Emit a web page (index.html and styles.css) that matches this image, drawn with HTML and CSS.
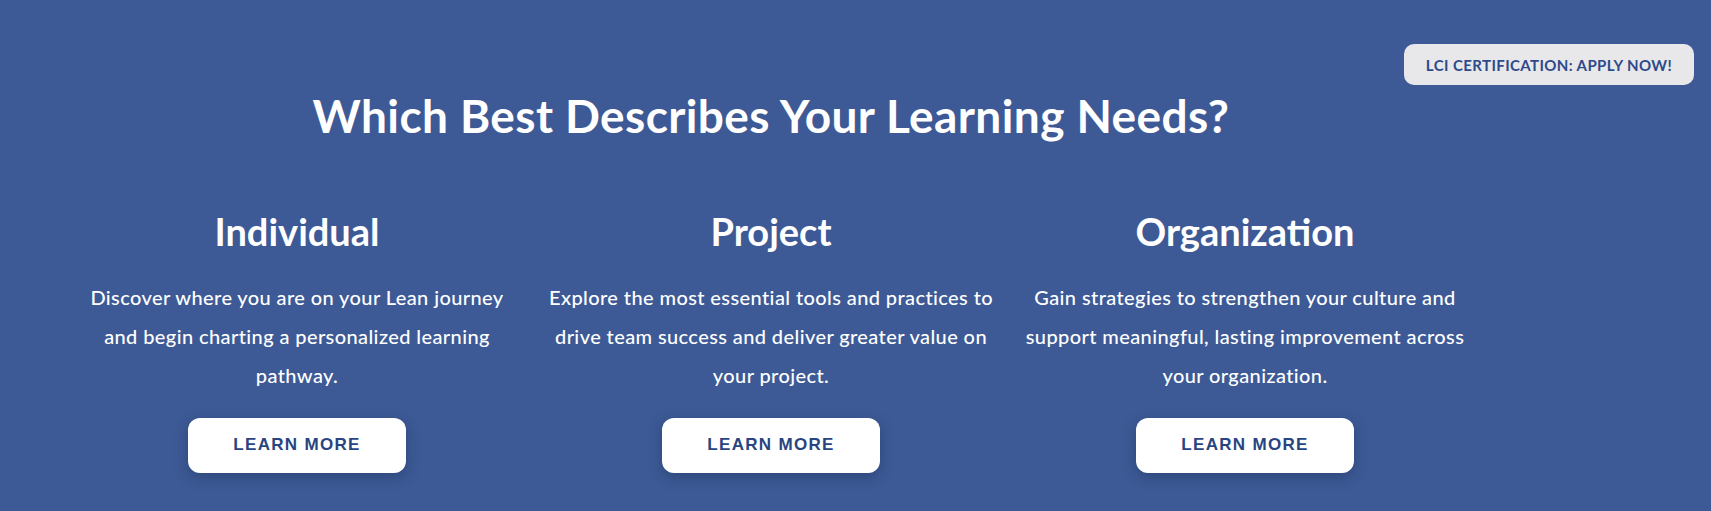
FILE: index.html
```html
<!DOCTYPE html>
<html lang="en">
<head>
    <meta charset="UTF-8">
    <meta name="viewport" content="width=device-width, initial-scale=1.0">
    <title>Learning Needs</title>
    <link rel="stylesheet" href="styles.css">
</head>
<body>
    <a class="cert-badge" href="#">LCI Certification: Apply Now!</a>
    <section class="needs">
        <h1 class="needs-title">Which Best Describes Your Learning Needs?</h1>
        <div class="needs-grid">
            <div class="need">
                <h2>Individual</h2>
                <p>Discover where you are on your Lean journey<br>and begin charting a personalized learning<br>pathway.</p>
                <a class="learn-btn" href="#">Learn More</a>
            </div>
            <div class="need">
                <h2>Project</h2>
                <p>Explore the most essential tools and practices to<br>drive team success and deliver greater value on<br>your project.</p>
                <a class="learn-btn" href="#">Learn More</a>
            </div>
            <div class="need">
                <h2>Organization</h2>
                <p>Gain strategies to strengthen your culture and<br>support meaningful, lasting improvement across<br>your organization.</p>
                <a class="learn-btn" href="#">Learn More</a>
            </div>
        </div>
    </section>
</body>
</html>
```

FILE: styles.css
```css
body {
    margin: 0;
    padding: 0;
    background-color: #3d5a96;
    font-family: Lato, "Noto Sans", sans-serif;
    color: white;
    height: 511px;
    overflow: hidden;
}
.cert-badge {
    position: absolute;
    top: 44px;
    right: 17px;
    width: 290px;
    height: 41px;
    display: flex;
    align-items: center;
    justify-content: center;
    background: #e8e8ea;
    color: #2d4a8a;
    border-radius: 10px;
    font-size: 15px;
    font-weight: 700;
    letter-spacing: 0.4px;
    text-transform: uppercase;
    text-decoration: none;
}
.needs {
    margin-left: 60px;
    width: 1422px;
    padding-top: 88px;
    text-align: center;
}
.needs-title {
    margin: 0 0 66px;
    font-size: 46px;
    line-height: 1.2;
    font-weight: 700;
    letter-spacing: 0.4px;
}
.needs-grid { display: grid; grid-template-columns: repeat(3, 1fr); }
.need { padding: 0 4px; }
.need h2 { margin: 0 0 23px; font-size: 38px; line-height: 1.2; font-weight: 700; }
.need p { margin: 0 0 23px; font-size: 20px; line-height: 39px; font-weight: 500; letter-spacing: 0.4px; }
.learn-btn {
    display: inline-flex;
    align-items: center;
    justify-content: center;
    width: 218px;
    height: 55px;
    background: white;
    color: #28457f;
    border-radius: 12px;
    box-shadow: 0 4px 14px rgba(20, 35, 70, 0.35);
    font-family: "Liberation Sans", Arial, sans-serif;
    font-size: 17px;
    font-weight: 700;
    letter-spacing: 1.3px;
    text-transform: uppercase;
    text-decoration: none;
}
```
